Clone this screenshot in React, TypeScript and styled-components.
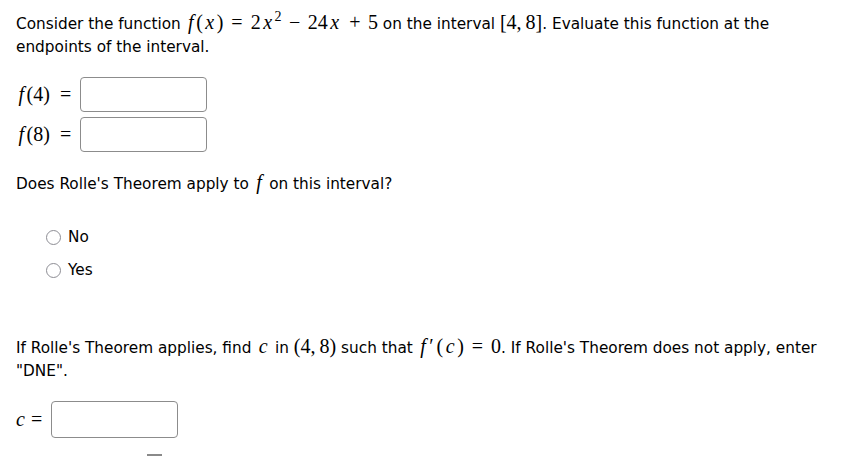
import React from "react";
import styled, { createGlobalStyle } from "styled-components";

const GlobalStyle = createGlobalStyle`
  html, body {
    margin: 0;
    padding: 0;
    background: #ffffff;
    overflow: hidden;
  }
`;

const Page = styled.section`
  width: 859px;
  height: 456px;
  box-sizing: border-box;
  padding: 11px 16px 0 16px;
  font-family: "DejaVu Sans", Verdana, sans-serif;
  font-size: 15.3px;
  color: #000;
  overflow: hidden;
`;

const Para = styled.p<{ $top?: number; $gap?: number }>`
  margin: ${(p) => p.$top ?? 0}px 0 ${(p) => p.$gap ?? 0}px 0;
  line-height: 23px;
  white-space: nowrap;
`;

const M = styled.span`
  font-family: "Liberation Serif", "Times New Roman", serif;
  font-size: 20px;
  white-space: nowrap;
`;

const V = styled.i<{ $pad?: number }>`
  font-family: "Liberation Serif", "Times New Roman", serif;
  font-style: italic;
  padding: 0 ${(p) => p.$pad ?? 2.5}px;
`;

const Op = styled.span<{ $rel?: boolean }>`
  margin: 0 ${(p) => (p.$rel ? 8 : 7.5)}px;
`;

const Eq = styled.span<{ $left?: number }>`
  margin-left: ${(p) => p.$left ?? 10}px;
`;

const Thin = styled.span`
  margin-right: 4px;
`;

const Sup = styled.sup`
  font-size: 14px;
  line-height: 0;
`;

const Prime = styled.span`
  margin: 0 3px 0 1px;
`;

const AnswerList = styled.div`
  display: flex;
  flex-direction: column;
  gap: 5px;
`;

const AnswerRow = styled.div`
  display: flex;
  align-items: center;
  gap: 9px;
`;

const Label = styled.span`
  font-family: "Liberation Serif", "Times New Roman", serif;
  font-size: 20px;
  white-space: nowrap;
`;

const AnswerBox = styled.input<{ $h?: number }>`
  box-sizing: border-box;
  width: 127px;
  height: ${(p) => p.$h ?? 35}px;
  border: 1px solid #8c8c8c;
  border-radius: 4px;
  background: #fff;
  margin: 0;
  padding: 0 6px;
  font-size: 14px;
`;

const Choices = styled.div`
  display: flex;
  flex-direction: column;
  gap: 13px;
  padding-left: 30px;
`;

const Choice = styled.label`
  display: flex;
  align-items: center;
  gap: 7px;
  height: 20px;
`;

const Radio = styled.span`
  box-sizing: border-box;
  width: 15px;
  height: 15px;
  border: 1.5px solid #8d8d94;
  border-radius: 50%;
  background: #fff;
`;

const BottomStub = styled.div`
  margin: 16px 0 0 131px;
  width: 15px;
  height: 2px;
  background: #8a8a8a;
`;

const App = () => {
  return (
    <>
      <GlobalStyle />
      <Page>
        <Para $gap={18}>
          Consider the function{" "}
          <M>
            <V>f</V>(<V>x</V>)<Op $rel>=</Op>2<V>x</V>
            <Sup>2</Sup>
            <Op>−</Op>24<V>x</V>
            <Op>+</Op>5
          </M>{" "}
          on the interval{" "}
          <M>
            [4,<Thin />8]
          </M>
          . Evaluate this function at the
          <br />
          endpoints of the interval.
        </Para>

        <AnswerList>
          <AnswerRow>
            <Label>
              <V>f</V>(4)<Eq>=</Eq>
            </Label>
            <AnswerBox type="text" />
          </AnswerRow>
          <AnswerRow>
            <Label>
              <V>f</V>(8)<Eq>=</Eq>
            </Label>
            <AnswerBox type="text" />
          </AnswerRow>
        </AnswerList>

        <Para $top={19} $gap={31}>
          Does Rolle's Theorem apply to{" "}
          <M>
            <V>f</V>
          </M>{" "}
          on this interval?
        </Para>

        <Choices>
          <Choice>
            <Radio />
            No
          </Choice>
          <Choice>
            <Radio />
            Yes
          </Choice>
        </Choices>

        <Para $top={55} $gap={18}>
          If Rolle's Theorem applies, find{" "}
          <M>
            <V>c</V>
          </M>{" "}
          in{" "}
          <M>
            (4,<Thin />8)
          </M>{" "}
          such that{" "}
          <M>
            <V>f</V>
            <Prime>′</Prime>(<V>c</V>)<Op $rel>=</Op>0
          </M>
          . If Rolle's Theorem does not apply, enter
          <br />
          "DNE".
        </Para>

        <AnswerRow>
          <Label>
            <V $pad={0}>c</V>
            <Eq $left={6}>=</Eq>
          </Label>
          <AnswerBox type="text" $h={37} />
        </AnswerRow>

        <BottomStub />
      </Page>
    </>
  );
};

export default App;
